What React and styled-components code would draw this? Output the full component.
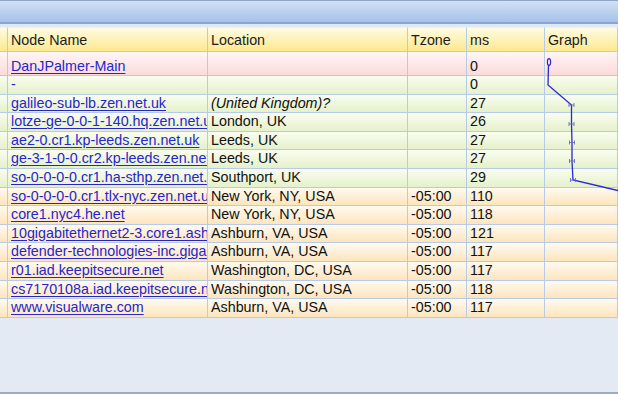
import React from "react";
import styled, { createGlobalStyle } from "styled-components";

const hops = [
  { name: "DanJPalmer-Main", loc: "", tz: "", ms: "0", tone: "pink", tall: true },
  { name: "-", loc: "", tz: "", ms: "0", tone: "green", plain: true },
  { name: "galileo-sub-lb.zen.net.uk", loc: "(United Kingdom)?", guess: true, tz: "", ms: "27", tone: "green" },
  { name: "lotze-ge-0-0-1-140.hq.zen.net.uk", loc: "London, UK", tz: "", ms: "26", tone: "green" },
  { name: "ae2-0.cr1.kp-leeds.zen.net.uk", loc: "Leeds, UK", tz: "", ms: "27", tone: "green" },
  { name: "ge-3-1-0-0.cr2.kp-leeds.zen.net.uk", loc: "Leeds, UK", tz: "", ms: "27", tone: "green" },
  { name: "so-0-0-0-0.cr1.ha-sthp.zen.net.uk", loc: "Southport, UK", tz: "", ms: "29", tone: "green" },
  { name: "so-0-0-0-0.cr1.tlx-nyc.zen.net.uk", loc: "New York, NY, USA", tz: "-05:00", ms: "110", tone: "orange" },
  { name: "core1.nyc4.he.net", loc: "New York, NY, USA", tz: "-05:00", ms: "118", tone: "orange" },
  { name: "10gigabitethernet2-3.core1.ash1.he.net", loc: "Ashburn, VA, USA", tz: "-05:00", ms: "121", tone: "orange" },
  { name: "defender-technologies-inc.gigabit.he.net", loc: "Ashburn, VA, USA", tz: "-05:00", ms: "117", tone: "orange" },
  { name: "r01.iad.keepitsecure.net", loc: "Washington, DC, USA", tz: "-05:00", ms: "117", tone: "orange" },
  { name: "cs7170108a.iad.keepitsecure.net", loc: "Washington, DC, USA", tz: "-05:00", ms: "118", tone: "orange" },
  { name: "www.visualware.com", loc: "Ashburn, VA, USA", tz: "-05:00", ms: "117", tone: "orange" },
];

const tones = {
  pink: "linear-gradient(#fff6f6, #fcdada)",
  green: "linear-gradient(#f9fdf0, #e5f1cb)",
  orange: "linear-gradient(#fffaf0, #fde5bd)",
};

const GlobalStyle = createGlobalStyle`
  html, body {
    margin: 0;
    padding: 0;
  }
  body {
    font-family: "Liberation Sans", Arial, sans-serif;
    background: #e3eaf4;
  }
`;

const Page = styled.div`
  width: 618px;
  height: 394px;
  display: flex;
  flex-direction: column;
  background: #e3eaf4;
  border-bottom: 2px solid #9aabc8;
  box-sizing: border-box;
  overflow: hidden;
`;

const TitleBar = styled.div`
  height: 21px;
  border-top: 1px solid #8fa6c8;
  border-bottom: 2px solid #88a5d3;
  background: linear-gradient(#d2e0f4, #a6c1ea);
  flex-shrink: 0;
`;

const Gap = styled.div`
  height: 3px;
  background: #dfe8f5;
  flex-shrink: 0;
`;

const Table = styled.div`
  position: relative;
  display: grid;
  grid-template-columns: 8px 200px 200px 59px 78px 1fr;
  font-size: 14.3px;
  color: #111;
`;

const Row = styled.div`
  display: contents;
`;

const Cell = styled.div`
  height: ${(p) => p.$h}px;
  line-height: ${(p) => p.$h}px;
  padding-left: 3px;
  padding-top: ${(p) => p.$pt || 0}px;
  background: ${(p) => p.$bg};
  border-right: 1px solid #b7cbe6;
  border-bottom: 1px solid #b7cbe6;
  white-space: nowrap;
  overflow: hidden;
  font-style: ${(p) => (p.$italic ? "italic" : "normal")};
`;

const HeadCell = styled(Cell)`
  color: #1c1c1c;
  border-top: 1px solid #eef2f8;
`;

const Link = styled.span`
  color: #2626cc;
  text-decoration: ${(p) => (p.$plain ? "none" : "underline")};
  text-underline-offset: 2px;
`;

const Graph = styled.svg`
  position: absolute;
  left: 545px;
  top: 25px;
  width: 73px;
  height: 300px;
  overflow: visible;
  pointer-events: none;
`;

const headBg = "linear-gradient(#fffbe2, #fde98e)";

const App = () => {
  return (
    <>
      <GlobalStyle />
      <Page>
        <TitleBar />
        <Gap />
        <Table>
          <Row>
            <HeadCell $h={22} $pt={1} $bg={headBg} />
            <HeadCell $h={22} $pt={1} $bg={headBg}>Node Name</HeadCell>
            <HeadCell $h={22} $pt={1} $bg={headBg}>Location</HeadCell>
            <HeadCell $h={22} $pt={1} $bg={headBg}>Tzone</HeadCell>
            <HeadCell $h={22} $pt={1} $bg={headBg}>ms</HeadCell>
            <HeadCell $h={22} $pt={1} $bg={headBg}>Graph</HeadCell>
          </Row>
          {hops.map((hop, i) => {
            const h = hop.tall ? 18 : 17.6;
            const pt = hop.tall ? 5 : 0;
            const bg = tones[hop.tone];
            return (
              <Row key={i}>
                <Cell $h={h} $pt={pt} $bg={bg} />
                <Cell $h={h} $pt={pt} $bg={bg}>
                  <Link $plain={hop.plain}>{hop.name}</Link>
                </Cell>
                <Cell $h={h} $pt={pt} $bg={bg} $italic={hop.guess}>{hop.loc}</Cell>
                <Cell $h={h} $pt={pt} $bg={bg}>{hop.tz}</Cell>
                <Cell $h={h} $pt={pt} $bg={bg}>{hop.ms}</Cell>
                <Cell $h={h} $pt={pt} $bg={bg} />
              </Row>
            );
          })}
          <Graph viewBox="0 0 73 300">
            <ellipse cx="4" cy="10" rx="1.6" ry="3.4" fill="none" stroke="#2a2ad0" strokeWidth="1.2" />
            <polyline
              points="3.5,13 3,33 26.5,53 26.5,72 27,90.5 27,109 28,128 73,138.5"
              fill="none"
              stroke="#2a2ad0"
              strokeWidth="1.3"
            />
            {[
              [26.5, 53],
              [26.5, 72],
              [27, 90.5],
              [27, 109],
              [28, 128],
            ].map(([x, y], k) => (
              <path
                key={k}
                d={`M${x - 2.5} ${y} H${x + 2.5} M${x - 2.5} ${y - 2} V${y + 2} M${x + 2.5} ${y - 2} V${y + 2}`}
                stroke="#6b6bbf"
                strokeWidth="0.9"
                fill="none"
              />
            ))}
          </Graph>
        </Table>
      </Page>
    </>
  );
};

export default App;
